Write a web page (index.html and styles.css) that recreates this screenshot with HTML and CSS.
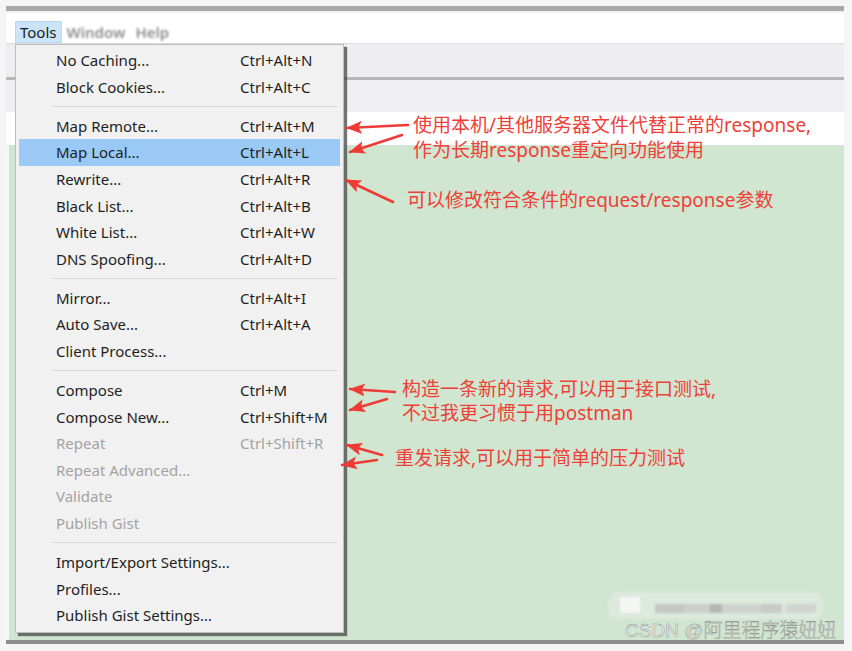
FILE: index.html
```html
<!DOCTYPE html>
<html lang="zh-CN">
<head>
<meta charset="utf-8">
<title>Charles Tools</title>
<link rel="stylesheet" href="styles.css">
</head>
<body>
<div class="screen">
  <div class="titlebar"></div>
  <div class="menubar">
    <span class="menu-top active">Tools</span>
    <span class="menu-top blur">Window</span>
    <span class="menu-top blur">Help</span>
  </div>
  <div class="toolbar"></div>
  <div class="toolbar2"></div>
  <div class="whitebar"></div>
  <div class="canvas"></div>
  <div class="bottombar"></div>
</div>

<div class="dropdown">
  <div class="item"><span class="label">No Caching...</span><span class="key">Ctrl+Alt+N</span></div>
  <div class="item"><span class="label">Block Cookies...</span><span class="key">Ctrl+Alt+C</span></div>
  <div class="sep"></div>
  <div class="item"><span class="label">Map Remote...</span><span class="key">Ctrl+Alt+M</span></div>
  <div class="item selected"><span class="label">Map Local...</span><span class="key">Ctrl+Alt+L</span></div>
  <div class="item"><span class="label">Rewrite...</span><span class="key">Ctrl+Alt+R</span></div>
  <div class="item"><span class="label">Black List...</span><span class="key">Ctrl+Alt+B</span></div>
  <div class="item"><span class="label">White List...</span><span class="key">Ctrl+Alt+W</span></div>
  <div class="item"><span class="label">DNS Spoofing...</span><span class="key">Ctrl+Alt+D</span></div>
  <div class="sep"></div>
  <div class="item"><span class="label">Mirror...</span><span class="key">Ctrl+Alt+I</span></div>
  <div class="item"><span class="label">Auto Save...</span><span class="key">Ctrl+Alt+A</span></div>
  <div class="item"><span class="label">Client Process...</span><span class="key"></span></div>
  <div class="sep"></div>
  <div class="item"><span class="label">Compose</span><span class="key">Ctrl+M</span></div>
  <div class="item"><span class="label">Compose New...</span><span class="key">Ctrl+Shift+M</span></div>
  <div class="item disabled"><span class="label">Repeat</span><span class="key">Ctrl+Shift+R</span></div>
  <div class="item disabled"><span class="label">Repeat Advanced...</span><span class="key"></span></div>
  <div class="item disabled"><span class="label">Validate</span><span class="key"></span></div>
  <div class="item disabled"><span class="label">Publish Gist</span><span class="key"></span></div>
  <div class="sep"></div>
  <div class="item"><span class="label">Import/Export Settings...</span><span class="key"></span></div>
  <div class="item"><span class="label">Profiles...</span><span class="key"></span></div>
  <div class="item"><span class="label">Publish Gist Settings...</span><span class="key"></span></div>
</div>

<div class="note note-map">使用本机/其他服务器文件代替正常的response,<br>作为长期response重定向功能使用</div>
<div class="note note-rewrite">可以修改符合条件的request/response参数</div>
<div class="note note-compose">构造一条新的请求,可以用于接口测试,<br>不过我更习惯于用postman</div>
<div class="note note-repeat">重发请求,可以用于简单的压力测试</div>

<svg class="arrows" width="852" height="651" viewBox="0 0 852 651">
  <defs>
    <marker id="head" markerUnits="userSpaceOnUse" markerWidth="17" markerHeight="13" refX="15" refY="6.5" orient="auto">
      <path d="M0,0 L16,6.5 L0,13 L3.5,6.5 Z" fill="#ee3b35"/>
    </marker>
  </defs>
  <g stroke="#ee3b35" stroke-width="2.6" stroke-linecap="round" fill="none" marker-end="url(#head)">
    <line x1="408" y1="125" x2="347" y2="128"/>
    <line x1="402" y1="135" x2="350" y2="152"/>
    <line x1="393" y1="202" x2="346" y2="180"/>
    <line x1="395" y1="392" x2="350" y2="389"/>
    <line x1="387" y1="399" x2="350" y2="410"/>
    <line x1="382" y1="455" x2="347" y2="445"/>
    <line x1="377" y1="460" x2="342" y2="465"/>
  </g>
</svg>

<div class="mosaic">
  <span class="tile t1"></span><span class="tile t2"></span><span class="tile t3"></span><span class="tile t4"></span><span class="tile t5"></span><span class="tile t6"></span><span class="tile t7"></span>
</div>
<div class="watermark">CSDN @阿里程序猿妞妞</div>
</body>
</html>
```
FILE: styles.css
```css
html, body {
  margin: 0;
  padding: 0;
}
body {
  width: 852px;
  height: 651px;
  background: #f5f5f5;
  position: relative;
  overflow: hidden;
  font-family: "Noto Sans", "Open Sans", sans-serif;
}
.screen {
  margin: 6px 8px 0 6px;
  height: 638px;
  display: flex;
  flex-direction: column;
  background: #fff;
}
.titlebar {
  height: 5px;
  background: #a9a9a9;
}
.menubar {
  height: 32px;
  box-sizing: border-box;
  border-top: 2px solid #f0f0f0;
  background: #fff;
  display: flex;
  align-items: flex-end;
  padding-left: 9px;
}
.menu-top {
  font-size: 15px;
  line-height: 22px;
  padding: 0 5px;
  color: #1b1b1b;
}
.menu-top.active {
  background: #cce4f7;
  box-shadow: inset 0 0 0 1px #b8d8f2;
}
.menu-top.blur {
  color: #8f8f8f;
  font-weight: 600;
  filter: blur(1.3px);
}
.toolbar {
  height: 37px;
  box-sizing: border-box;
  border-top: 1px solid #dedede;
  background: #eeeef0;
  border-bottom: 3px solid #b6b6b6;
}
.toolbar2 {
  height: 32px;
  background: #efeff1;
}
.whitebar {
  height: 33px;
  background: #fff;
}
.canvas {
  flex: 1;
  background: #d0e6d0;
  border-left: 3px solid #f4f8f4;
}
.bottombar {
  height: 4px;
  background: #8d8d8d;
}

.dropdown {
  position: absolute;
  left: 15px;
  top: 44px;
  width: 329px;
  height: 589px;
  box-sizing: border-box;
  padding: 2px 3px 0 3px;
  background: #f1f1f1;
  border: 1px solid #bdbdbd;
  box-shadow: 3px 3px 1px rgba(70, 70, 70, 0.75);
}
.item {
  height: 26.6px;
  display: flex;
  align-items: center;
  font-size: 15px;
  color: #1e1e1e;
}
.item .label {
  width: 184px;
  padding-left: 37px;
  white-space: nowrap;
}
.item .key {
  white-space: nowrap;
}
.item.selected {
  background: #99c9f4;
}
.item.disabled {
  color: #a3a3a3;
}
.sep {
  height: 12.4px;
  display: flex;
  align-items: center;
  padding-left: 33px;
  padding-right: 3px;
}
.sep::before {
  content: "";
  display: block;
  width: 100%;
  height: 1px;
  background: #d9d9d9;
}

.note {
  position: absolute;
  color: #ee4038;
  font-family: "Noto Sans", "Noto Sans CJK SC", sans-serif;
  font-size: 19px;
  line-height: 25px;
  white-space: nowrap;
}
.note-map { left: 413px; top: 113px; }
.note-rewrite { left: 407px; top: 188px; }
.note-compose { left: 402px; top: 377px; line-height: 24px; }
.note-repeat { left: 395px; top: 446px; }

.arrows {
  position: absolute;
  left: 0;
  top: 0;
  pointer-events: none;
}

.mosaic {
  position: absolute;
  left: 608px;
  top: 592px;
  width: 215px;
  height: 27px;
  border-radius: 12px;
  background: #dde9dd;
  filter: blur(1.2px);
}
.tile {
  position: absolute;
  display: block;
}
.t1 { left: 12px; top: 5px; width: 20px; height: 16px; background: #f3f6f3; }
.t2 { left: 47px; top: 12px; width: 30px; height: 9px; background: #c4c8c4; }
.t3 { left: 77px; top: 12px; width: 25px; height: 9px; background: #cbd0cb; }
.t4 { left: 102px; top: 12px; width: 12px; height: 9px; background: #b4b8b4; }
.t5 { left: 114px; top: 12px; width: 40px; height: 9px; background: #ccd3cc; }
.t6 { left: 154px; top: 12px; width: 20px; height: 9px; background: #c6cbc6; }
.t7 { left: 178px; top: 12px; width: 30px; height: 9px; background: #cfd5cf; }

.watermark {
  position: absolute;
  left: 625px;
  top: 619px;
  font-family: "Liberation Sans", "Noto Sans CJK SC", sans-serif;
  font-size: 19px;
  font-weight: 300;
  line-height: 24px;
  color: #f2f2f2;
  -webkit-text-stroke: 0.45px #8a8a8a;
  white-space: nowrap;
}
```
